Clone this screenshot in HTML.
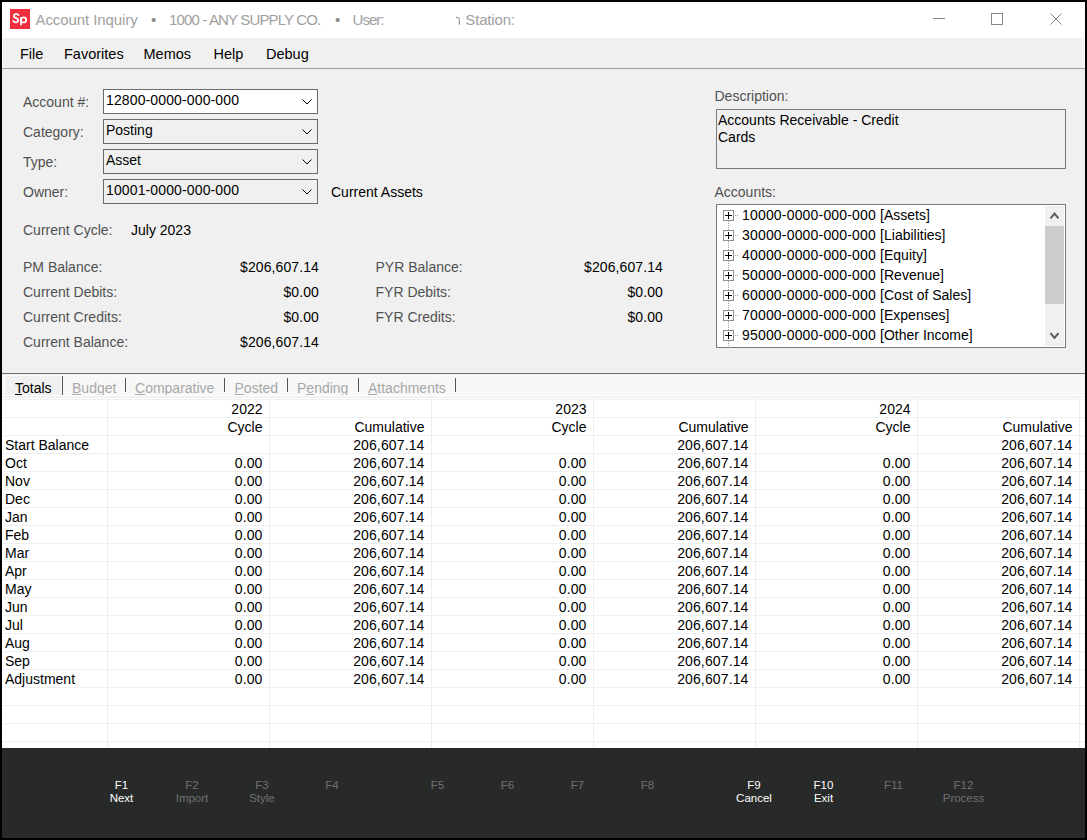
<!DOCTYPE html>
<html><head><meta charset="utf-8">
<style>
*{margin:0;padding:0;box-sizing:border-box}
html,body{width:1087px;height:840px;overflow:hidden;background:#000}
body{position:relative;font-family:"Liberation Sans",sans-serif;font-size:14px;color:#000}
.a{position:absolute;white-space:nowrap}
u{text-decoration:underline;text-underline-offset:1px}
</style></head><body>
<div class="a" style="left:2px;top:2px;width:1083px;height:836px;background:#fff"></div>
<svg class="a" style="left:10px;top:9px" width="20" height="20" viewBox="0 0 20 20"><rect width="20" height="20" fill="#ef2f3e"/><path d="M8.5 6.1C7.7 5.0 6.0 4.8 4.9 5.3C3.5 5.9 3.6 7.9 5.0 8.6L6.8 9.4C8.6 10.2 8.6 12.5 6.9 13.1C5.6 13.5 4.0 13.1 3.3 12.0" fill="none" stroke="#fff" stroke-width="1.8" stroke-linecap="round"/><circle cx="13.6" cy="10.9" r="2.6" fill="none" stroke="#fff" stroke-width="1.7"/><path d="M11.0 8.3V16.3" stroke="#fff" stroke-width="1.8"/></svg>
<div class="a" style="left:35.5px;top:11px;font-size:15px;line-height:17px;color:#a0a0a0;letter-spacing:-0.08px">Account Inquiry</div>
<div class="a" style="left:151px;top:11px;font-size:15px;line-height:17px;color:#8a8a8a;">•</div>
<div class="a" style="left:169px;top:11px;font-size:15px;line-height:17px;color:#a0a0a0;letter-spacing:-0.85px">1000 - ANY SUPPLY CO.</div>
<div class="a" style="left:335px;top:11px;font-size:15px;line-height:17px;color:#8a8a8a;">•</div>
<div class="a" style="left:352.5px;top:11px;font-size:15px;line-height:17px;color:#a0a0a0;letter-spacing:-0.95px">User:</div>
<svg class="a" style="left:450px;top:10px" width="15" height="20" viewBox="450 10 15 20"><path d="M456 17.6C457.8 17.2 459.4 17.6 459.4 19.8V24.8" fill="none" stroke="#9a9a9a" stroke-width="1.2"/></svg>
<div class="a" style="left:465.3px;top:11px;font-size:15px;line-height:17px;color:#a0a0a0;letter-spacing:-0.17px">Station:</div>
<div class="a" style="left:933px;top:18px;width:12px;height:1px;background:#858585"></div>
<div class="a" style="left:991px;top:13px;width:12px;height:12px;border:1px solid #858585"></div>
<svg class="a" style="left:1050px;top:13px" width="12" height="12" viewBox="0 0 12 12"><path d="M0.5 0.5L11.5 11.5M11.5 0.5L0.5 11.5" stroke="#858585" stroke-width="1"/></svg>
<div class="a" style="left:3px;top:38px;width:1081px;height:30px;background:#f0f0f0"></div>
<div class="a" style="left:2px;top:68px;width:1083px;height:1px;background:#a0a0a0"></div>
<div class="a" style="left:20px;top:45.5px;font-size:14.5px;line-height:17px;color:#000;">File</div>
<div class="a" style="left:64px;top:45.5px;font-size:14.5px;line-height:17px;color:#000;">Favorites</div>
<div class="a" style="left:143.5px;top:45.5px;font-size:14.5px;line-height:17px;color:#000;">Memos</div>
<div class="a" style="left:213.5px;top:45.5px;font-size:14.5px;line-height:17px;color:#000;">Help</div>
<div class="a" style="left:266px;top:45.5px;font-size:14.5px;line-height:17px;color:#000;">Debug</div>
<div class="a" style="left:2px;top:69px;width:1083px;height:304px;background:#f0f0f0"></div>
<div class="a" style="left:23px;top:94px;font-size:14px;line-height:16px;color:#505050;">Account #:</div>
<div class="a" style="left:23px;top:124px;font-size:14px;line-height:16px;color:#505050;">Category:</div>
<div class="a" style="left:23px;top:154px;font-size:14px;line-height:16px;color:#505050;">Type:</div>
<div class="a" style="left:23px;top:184px;font-size:14px;line-height:16px;color:#505050;">Owner:</div>
<div class="a" style="left:103px;top:89px;width:215px;height:25px;border:1px solid #6a6a6a;background:#fff"></div>
<div class="a" style="left:106px;top:91.6px;font-size:14px;line-height:16px;color:#000;letter-spacing:0.13px">12800-0000-000-000</div>
<svg class="a" style="left:302px;top:99px" width="10" height="6" viewBox="0 0 10 6"><path d="M0.5 0.5L5 5L9.5 0.5" fill="none" stroke="#000" stroke-width="1"/></svg>
<div class="a" style="left:103px;top:119px;width:215px;height:25px;border:1px solid #6a6a6a;background:#f0f0f0"></div>
<div class="a" style="left:106px;top:121.6px;font-size:14px;line-height:16px;color:#000;">Posting</div>
<svg class="a" style="left:302px;top:129px" width="10" height="6" viewBox="0 0 10 6"><path d="M0.5 0.5L5 5L9.5 0.5" fill="none" stroke="#000" stroke-width="1"/></svg>
<div class="a" style="left:103px;top:149px;width:215px;height:25px;border:1px solid #6a6a6a;background:#f0f0f0"></div>
<div class="a" style="left:106px;top:151.6px;font-size:14px;line-height:16px;color:#000;">Asset</div>
<svg class="a" style="left:302px;top:159px" width="10" height="6" viewBox="0 0 10 6"><path d="M0.5 0.5L5 5L9.5 0.5" fill="none" stroke="#000" stroke-width="1"/></svg>
<div class="a" style="left:103px;top:179px;width:215px;height:25px;border:1px solid #6a6a6a;background:#f0f0f0"></div>
<div class="a" style="left:106px;top:181.6px;font-size:14px;line-height:16px;color:#000;letter-spacing:0.13px">10001-0000-000-000</div>
<svg class="a" style="left:302px;top:189px" width="10" height="6" viewBox="0 0 10 6"><path d="M0.5 0.5L5 5L9.5 0.5" fill="none" stroke="#000" stroke-width="1"/></svg>
<div class="a" style="left:331px;top:184px;font-size:14px;line-height:16px;color:#000;">Current Assets</div>
<div class="a" style="left:23px;top:222px;font-size:14px;line-height:16px;color:#505050;">Current Cycle:</div>
<div class="a" style="left:131px;top:222px;font-size:14px;line-height:16px;color:#000;">July 2023</div>
<div class="a" style="left:23px;top:259px;font-size:14px;line-height:16px;color:#505050;">PM Balance:</div>
<div class="a" style="right:768px;top:259px;font-size:14px;line-height:16px;color:#000;text-align:right;letter-spacing:0.1px">$206,607.14</div>
<div class="a" style="left:375.5px;top:259px;font-size:14px;line-height:16px;color:#505050;">PYR Balance:</div>
<div class="a" style="right:424px;top:259px;font-size:14px;line-height:16px;color:#000;text-align:right;letter-spacing:0.1px">$206,607.14</div>
<div class="a" style="left:23px;top:284px;font-size:14px;line-height:16px;color:#505050;">Current Debits:</div>
<div class="a" style="right:768px;top:284px;font-size:14px;line-height:16px;color:#000;text-align:right;letter-spacing:0.1px">$0.00</div>
<div class="a" style="left:375.5px;top:284px;font-size:14px;line-height:16px;color:#505050;">FYR Debits:</div>
<div class="a" style="right:424px;top:284px;font-size:14px;line-height:16px;color:#000;text-align:right;letter-spacing:0.1px">$0.00</div>
<div class="a" style="left:23px;top:309px;font-size:14px;line-height:16px;color:#505050;">Current Credits:</div>
<div class="a" style="right:768px;top:309px;font-size:14px;line-height:16px;color:#000;text-align:right;letter-spacing:0.1px">$0.00</div>
<div class="a" style="left:375.5px;top:309px;font-size:14px;line-height:16px;color:#505050;">FYR Credits:</div>
<div class="a" style="right:424px;top:309px;font-size:14px;line-height:16px;color:#000;text-align:right;letter-spacing:0.1px">$0.00</div>
<div class="a" style="left:23px;top:334px;font-size:14px;line-height:16px;color:#505050;">Current Balance:</div>
<div class="a" style="right:768px;top:334px;font-size:14px;line-height:16px;color:#000;text-align:right;letter-spacing:0.1px">$206,607.14</div>
<div class="a" style="left:714.5px;top:88px;font-size:14px;line-height:16px;color:#505050;">Description:</div>
<div class="a" style="left:716px;top:109px;width:350px;height:60px;border:1px solid #7a7a7a;background:#f0f0f0"></div>
<div class="a" style="left:718px;top:111.6px;font-size:14px;line-height:16px;color:#000;">Accounts Receivable - Credit</div>
<div class="a" style="left:718px;top:128.6px;font-size:14px;line-height:16px;color:#000;">Cards</div>
<div class="a" style="left:714.5px;top:184px;font-size:14px;line-height:16px;color:#505050;">Accounts:</div>
<div class="a" style="left:716px;top:204px;width:350px;height:144px;border:1px solid #7a7a7a;background:#fff"></div>
<div class="a" style="left:1045px;top:206px;width:19px;height:140px;background:#f0f0f0"></div>
<div class="a" style="left:1045px;top:226px;width:19px;height:78px;background:#cdcdcd"></div>
<svg class="a" style="left:1045px;top:206px" width="19" height="140" viewBox="1045 206 19 140"><path d="M1050.5 218.3L1054.5 213.6L1058.5 218.3" fill="none" stroke="#5c5c5c" stroke-width="2"/><path d="M1050.5 333.1L1054.5 337.9L1058.5 333.1" fill="none" stroke="#5c5c5c" stroke-width="2"/></svg>
<svg class="a" style="left:717px;top:205px" width="328" height="142" viewBox="717 205 328 142">
<rect x="723.5" y="210.5" width="10" height="10" fill="#fff" stroke="#919191"/>
<path d="M725 215.5H732M728.5 212V219" stroke="#000" stroke-width="1"/>
<path d="M735 215.5H739" stroke="#a0a0a0" stroke-dasharray="1 1"/>
<path d="M728.5 221V230" stroke="#a0a0a0" stroke-dasharray="1 1"/>
<rect x="723.5" y="230.5" width="10" height="10" fill="#fff" stroke="#919191"/>
<path d="M725 235.5H732M728.5 232V239" stroke="#000" stroke-width="1"/>
<path d="M735 235.5H739" stroke="#a0a0a0" stroke-dasharray="1 1"/>
<path d="M728.5 241V250" stroke="#a0a0a0" stroke-dasharray="1 1"/>
<rect x="723.5" y="250.5" width="10" height="10" fill="#fff" stroke="#919191"/>
<path d="M725 255.5H732M728.5 252V259" stroke="#000" stroke-width="1"/>
<path d="M735 255.5H739" stroke="#a0a0a0" stroke-dasharray="1 1"/>
<path d="M728.5 261V270" stroke="#a0a0a0" stroke-dasharray="1 1"/>
<rect x="723.5" y="270.5" width="10" height="10" fill="#fff" stroke="#919191"/>
<path d="M725 275.5H732M728.5 272V279" stroke="#000" stroke-width="1"/>
<path d="M735 275.5H739" stroke="#a0a0a0" stroke-dasharray="1 1"/>
<path d="M728.5 281V290" stroke="#a0a0a0" stroke-dasharray="1 1"/>
<rect x="723.5" y="290.5" width="10" height="10" fill="#fff" stroke="#919191"/>
<path d="M725 295.5H732M728.5 292V299" stroke="#000" stroke-width="1"/>
<path d="M735 295.5H739" stroke="#a0a0a0" stroke-dasharray="1 1"/>
<path d="M728.5 301V310" stroke="#a0a0a0" stroke-dasharray="1 1"/>
<rect x="723.5" y="310.5" width="10" height="10" fill="#fff" stroke="#919191"/>
<path d="M725 315.5H732M728.5 312V319" stroke="#000" stroke-width="1"/>
<path d="M735 315.5H739" stroke="#a0a0a0" stroke-dasharray="1 1"/>
<path d="M728.5 321V330" stroke="#a0a0a0" stroke-dasharray="1 1"/>
<rect x="723.5" y="330.5" width="10" height="10" fill="#fff" stroke="#919191"/>
<path d="M725 335.5H732M728.5 332V339" stroke="#000" stroke-width="1"/>
<path d="M735 335.5H739" stroke="#a0a0a0" stroke-dasharray="1 1"/>
<path d="M728.5 341V350" stroke="#a0a0a0" stroke-dasharray="1 1"/>
</svg>
<div class="a" style="left:742px;top:207px;font-size:14px;line-height:16px;color:#000;"><span style="letter-spacing:0.18px">10000-0000-000-000 </span>[Assets]</div>
<div class="a" style="left:742px;top:227px;font-size:14px;line-height:16px;color:#000;"><span style="letter-spacing:0.18px">30000-0000-000-000 </span>[Liabilities]</div>
<div class="a" style="left:742px;top:247px;font-size:14px;line-height:16px;color:#000;"><span style="letter-spacing:0.18px">40000-0000-000-000 </span>[Equity]</div>
<div class="a" style="left:742px;top:267px;font-size:14px;line-height:16px;color:#000;"><span style="letter-spacing:0.18px">50000-0000-000-000 </span>[Revenue]</div>
<div class="a" style="left:742px;top:287px;font-size:14px;line-height:16px;color:#000;"><span style="letter-spacing:0.18px">60000-0000-000-000 </span>[Cost of Sales]</div>
<div class="a" style="left:742px;top:307px;font-size:14px;line-height:16px;color:#000;"><span style="letter-spacing:0.18px">70000-0000-000-000 </span>[Expenses]</div>
<div class="a" style="left:742px;top:327px;font-size:14px;line-height:16px;color:#000;"><span style="letter-spacing:0.18px">95000-0000-000-000 </span>[Other Income]</div>
<div class="a" style="left:2px;top:373px;width:1083px;height:1px;background:#6e6e6e"></div>
<div class="a" style="left:2px;top:374px;width:1083px;height:21px;background:#f7f7f7"></div>
<div class="a" style="left:6px;top:376px;width:55px;height:20px;background:#f0f0f0"></div>
<div class="a" style="left:62px;top:376px;width:1px;height:20px;background:#555"></div>
<div class="a" style="left:15px;top:379.8px;font-size:14px;line-height:16px;color:#000;"><u>T</u>otals</div>
<div class="a" style="left:72px;top:379.8px;font-size:14px;line-height:16px;color:#a8a8a8;"><u>B</u>udget</div>
<div class="a" style="left:125px;top:378px;width:1px;height:14px;background:#555"></div>
<div class="a" style="left:135px;top:379.8px;font-size:14px;line-height:16px;color:#a8a8a8;"><u>C</u>omparative</div>
<div class="a" style="left:224px;top:378px;width:1px;height:14px;background:#555"></div>
<div class="a" style="left:234.5px;top:379.8px;font-size:14px;line-height:16px;color:#a8a8a8;"><u>P</u>osted</div>
<div class="a" style="left:287px;top:378px;width:1px;height:14px;background:#555"></div>
<div class="a" style="left:297px;top:379.8px;font-size:14px;line-height:16px;color:#a8a8a8;">P<u>e</u>nding</div>
<div class="a" style="left:358px;top:378px;width:1px;height:14px;background:#555"></div>
<div class="a" style="left:368px;top:379.8px;font-size:14px;line-height:16px;color:#a8a8a8;"><u>A</u>ttachments</div>
<div class="a" style="left:455px;top:378px;width:1px;height:14px;background:#555"></div>
<div class="a" style="left:2px;top:395px;width:1083px;height:353px;background:#fff"></div>
<div class="a" style="left:3px;top:396px;width:1082px;height:2px;background:#f1f1f1"></div>
<div class="a" style="left:3px;top:399px;width:1082px;height:1px;background:#efefef"></div>
<div class="a" style="left:3px;top:417px;width:1082px;height:1px;background:#efefef"></div>
<div class="a" style="left:3px;top:435px;width:1082px;height:1px;background:#efefef"></div>
<div class="a" style="left:3px;top:453px;width:1082px;height:1px;background:#efefef"></div>
<div class="a" style="left:3px;top:471px;width:1082px;height:1px;background:#efefef"></div>
<div class="a" style="left:3px;top:489px;width:1082px;height:1px;background:#efefef"></div>
<div class="a" style="left:3px;top:507px;width:1082px;height:1px;background:#efefef"></div>
<div class="a" style="left:3px;top:525px;width:1082px;height:1px;background:#efefef"></div>
<div class="a" style="left:3px;top:543px;width:1082px;height:1px;background:#efefef"></div>
<div class="a" style="left:3px;top:561px;width:1082px;height:1px;background:#efefef"></div>
<div class="a" style="left:3px;top:579px;width:1082px;height:1px;background:#efefef"></div>
<div class="a" style="left:3px;top:597px;width:1082px;height:1px;background:#efefef"></div>
<div class="a" style="left:3px;top:615px;width:1082px;height:1px;background:#efefef"></div>
<div class="a" style="left:3px;top:633px;width:1082px;height:1px;background:#efefef"></div>
<div class="a" style="left:3px;top:651px;width:1082px;height:1px;background:#efefef"></div>
<div class="a" style="left:3px;top:669px;width:1082px;height:1px;background:#efefef"></div>
<div class="a" style="left:3px;top:687px;width:1082px;height:1px;background:#efefef"></div>
<div class="a" style="left:3px;top:705px;width:1082px;height:1px;background:#efefef"></div>
<div class="a" style="left:3px;top:723px;width:1082px;height:1px;background:#efefef"></div>
<div class="a" style="left:3px;top:741px;width:1082px;height:1px;background:#efefef"></div>
<div class="a" style="left:107px;top:397px;width:1px;height:351px;background:#efefef"></div>
<div class="a" style="left:269px;top:397px;width:1px;height:351px;background:#efefef"></div>
<div class="a" style="left:431px;top:397px;width:1px;height:351px;background:#efefef"></div>
<div class="a" style="left:593px;top:397px;width:1px;height:351px;background:#efefef"></div>
<div class="a" style="left:755px;top:397px;width:1px;height:351px;background:#efefef"></div>
<div class="a" style="left:917px;top:397px;width:1px;height:351px;background:#efefef"></div>
<div class="a" style="left:1079px;top:397px;width:1px;height:351px;background:#efefef"></div>
<div class="a" style="right:824.5px;top:401px;font-size:14px;line-height:16px;color:#000;text-align:right;">2022</div>
<div class="a" style="right:500.5px;top:401px;font-size:14px;line-height:16px;color:#000;text-align:right;">2023</div>
<div class="a" style="right:176.5px;top:401px;font-size:14px;line-height:16px;color:#000;text-align:right;">2024</div>
<div class="a" style="right:824.5px;top:419px;font-size:14px;line-height:16px;color:#000;text-align:right;">Cycle</div>
<div class="a" style="right:662.5px;top:419px;font-size:14px;line-height:16px;color:#000;text-align:right;">Cumulative</div>
<div class="a" style="right:500.5px;top:419px;font-size:14px;line-height:16px;color:#000;text-align:right;">Cycle</div>
<div class="a" style="right:338.5px;top:419px;font-size:14px;line-height:16px;color:#000;text-align:right;">Cumulative</div>
<div class="a" style="right:176.5px;top:419px;font-size:14px;line-height:16px;color:#000;text-align:right;">Cycle</div>
<div class="a" style="right:14.5px;top:419px;font-size:14px;line-height:16px;color:#000;text-align:right;">Cumulative</div>
<div class="a" style="left:5px;top:437px;font-size:14px;line-height:16px;color:#000;">Start Balance</div>
<div class="a" style="right:662.5px;top:437px;font-size:14px;line-height:16px;color:#000;text-align:right;letter-spacing:0.13px">206,607.14</div>
<div class="a" style="right:338.5px;top:437px;font-size:14px;line-height:16px;color:#000;text-align:right;letter-spacing:0.13px">206,607.14</div>
<div class="a" style="right:14.5px;top:437px;font-size:14px;line-height:16px;color:#000;text-align:right;letter-spacing:0.13px">206,607.14</div>
<div class="a" style="left:5px;top:455px;font-size:14px;line-height:16px;color:#000;">Oct</div>
<div class="a" style="right:824.5px;top:455px;font-size:14px;line-height:16px;color:#000;text-align:right;letter-spacing:0.13px">0.00</div>
<div class="a" style="right:662.5px;top:455px;font-size:14px;line-height:16px;color:#000;text-align:right;letter-spacing:0.13px">206,607.14</div>
<div class="a" style="right:500.5px;top:455px;font-size:14px;line-height:16px;color:#000;text-align:right;letter-spacing:0.13px">0.00</div>
<div class="a" style="right:338.5px;top:455px;font-size:14px;line-height:16px;color:#000;text-align:right;letter-spacing:0.13px">206,607.14</div>
<div class="a" style="right:176.5px;top:455px;font-size:14px;line-height:16px;color:#000;text-align:right;letter-spacing:0.13px">0.00</div>
<div class="a" style="right:14.5px;top:455px;font-size:14px;line-height:16px;color:#000;text-align:right;letter-spacing:0.13px">206,607.14</div>
<div class="a" style="left:5px;top:473px;font-size:14px;line-height:16px;color:#000;">Nov</div>
<div class="a" style="right:824.5px;top:473px;font-size:14px;line-height:16px;color:#000;text-align:right;letter-spacing:0.13px">0.00</div>
<div class="a" style="right:662.5px;top:473px;font-size:14px;line-height:16px;color:#000;text-align:right;letter-spacing:0.13px">206,607.14</div>
<div class="a" style="right:500.5px;top:473px;font-size:14px;line-height:16px;color:#000;text-align:right;letter-spacing:0.13px">0.00</div>
<div class="a" style="right:338.5px;top:473px;font-size:14px;line-height:16px;color:#000;text-align:right;letter-spacing:0.13px">206,607.14</div>
<div class="a" style="right:176.5px;top:473px;font-size:14px;line-height:16px;color:#000;text-align:right;letter-spacing:0.13px">0.00</div>
<div class="a" style="right:14.5px;top:473px;font-size:14px;line-height:16px;color:#000;text-align:right;letter-spacing:0.13px">206,607.14</div>
<div class="a" style="left:5px;top:491px;font-size:14px;line-height:16px;color:#000;">Dec</div>
<div class="a" style="right:824.5px;top:491px;font-size:14px;line-height:16px;color:#000;text-align:right;letter-spacing:0.13px">0.00</div>
<div class="a" style="right:662.5px;top:491px;font-size:14px;line-height:16px;color:#000;text-align:right;letter-spacing:0.13px">206,607.14</div>
<div class="a" style="right:500.5px;top:491px;font-size:14px;line-height:16px;color:#000;text-align:right;letter-spacing:0.13px">0.00</div>
<div class="a" style="right:338.5px;top:491px;font-size:14px;line-height:16px;color:#000;text-align:right;letter-spacing:0.13px">206,607.14</div>
<div class="a" style="right:176.5px;top:491px;font-size:14px;line-height:16px;color:#000;text-align:right;letter-spacing:0.13px">0.00</div>
<div class="a" style="right:14.5px;top:491px;font-size:14px;line-height:16px;color:#000;text-align:right;letter-spacing:0.13px">206,607.14</div>
<div class="a" style="left:5px;top:509px;font-size:14px;line-height:16px;color:#000;">Jan</div>
<div class="a" style="right:824.5px;top:509px;font-size:14px;line-height:16px;color:#000;text-align:right;letter-spacing:0.13px">0.00</div>
<div class="a" style="right:662.5px;top:509px;font-size:14px;line-height:16px;color:#000;text-align:right;letter-spacing:0.13px">206,607.14</div>
<div class="a" style="right:500.5px;top:509px;font-size:14px;line-height:16px;color:#000;text-align:right;letter-spacing:0.13px">0.00</div>
<div class="a" style="right:338.5px;top:509px;font-size:14px;line-height:16px;color:#000;text-align:right;letter-spacing:0.13px">206,607.14</div>
<div class="a" style="right:176.5px;top:509px;font-size:14px;line-height:16px;color:#000;text-align:right;letter-spacing:0.13px">0.00</div>
<div class="a" style="right:14.5px;top:509px;font-size:14px;line-height:16px;color:#000;text-align:right;letter-spacing:0.13px">206,607.14</div>
<div class="a" style="left:5px;top:527px;font-size:14px;line-height:16px;color:#000;">Feb</div>
<div class="a" style="right:824.5px;top:527px;font-size:14px;line-height:16px;color:#000;text-align:right;letter-spacing:0.13px">0.00</div>
<div class="a" style="right:662.5px;top:527px;font-size:14px;line-height:16px;color:#000;text-align:right;letter-spacing:0.13px">206,607.14</div>
<div class="a" style="right:500.5px;top:527px;font-size:14px;line-height:16px;color:#000;text-align:right;letter-spacing:0.13px">0.00</div>
<div class="a" style="right:338.5px;top:527px;font-size:14px;line-height:16px;color:#000;text-align:right;letter-spacing:0.13px">206,607.14</div>
<div class="a" style="right:176.5px;top:527px;font-size:14px;line-height:16px;color:#000;text-align:right;letter-spacing:0.13px">0.00</div>
<div class="a" style="right:14.5px;top:527px;font-size:14px;line-height:16px;color:#000;text-align:right;letter-spacing:0.13px">206,607.14</div>
<div class="a" style="left:5px;top:545px;font-size:14px;line-height:16px;color:#000;">Mar</div>
<div class="a" style="right:824.5px;top:545px;font-size:14px;line-height:16px;color:#000;text-align:right;letter-spacing:0.13px">0.00</div>
<div class="a" style="right:662.5px;top:545px;font-size:14px;line-height:16px;color:#000;text-align:right;letter-spacing:0.13px">206,607.14</div>
<div class="a" style="right:500.5px;top:545px;font-size:14px;line-height:16px;color:#000;text-align:right;letter-spacing:0.13px">0.00</div>
<div class="a" style="right:338.5px;top:545px;font-size:14px;line-height:16px;color:#000;text-align:right;letter-spacing:0.13px">206,607.14</div>
<div class="a" style="right:176.5px;top:545px;font-size:14px;line-height:16px;color:#000;text-align:right;letter-spacing:0.13px">0.00</div>
<div class="a" style="right:14.5px;top:545px;font-size:14px;line-height:16px;color:#000;text-align:right;letter-spacing:0.13px">206,607.14</div>
<div class="a" style="left:5px;top:563px;font-size:14px;line-height:16px;color:#000;">Apr</div>
<div class="a" style="right:824.5px;top:563px;font-size:14px;line-height:16px;color:#000;text-align:right;letter-spacing:0.13px">0.00</div>
<div class="a" style="right:662.5px;top:563px;font-size:14px;line-height:16px;color:#000;text-align:right;letter-spacing:0.13px">206,607.14</div>
<div class="a" style="right:500.5px;top:563px;font-size:14px;line-height:16px;color:#000;text-align:right;letter-spacing:0.13px">0.00</div>
<div class="a" style="right:338.5px;top:563px;font-size:14px;line-height:16px;color:#000;text-align:right;letter-spacing:0.13px">206,607.14</div>
<div class="a" style="right:176.5px;top:563px;font-size:14px;line-height:16px;color:#000;text-align:right;letter-spacing:0.13px">0.00</div>
<div class="a" style="right:14.5px;top:563px;font-size:14px;line-height:16px;color:#000;text-align:right;letter-spacing:0.13px">206,607.14</div>
<div class="a" style="left:5px;top:581px;font-size:14px;line-height:16px;color:#000;">May</div>
<div class="a" style="right:824.5px;top:581px;font-size:14px;line-height:16px;color:#000;text-align:right;letter-spacing:0.13px">0.00</div>
<div class="a" style="right:662.5px;top:581px;font-size:14px;line-height:16px;color:#000;text-align:right;letter-spacing:0.13px">206,607.14</div>
<div class="a" style="right:500.5px;top:581px;font-size:14px;line-height:16px;color:#000;text-align:right;letter-spacing:0.13px">0.00</div>
<div class="a" style="right:338.5px;top:581px;font-size:14px;line-height:16px;color:#000;text-align:right;letter-spacing:0.13px">206,607.14</div>
<div class="a" style="right:176.5px;top:581px;font-size:14px;line-height:16px;color:#000;text-align:right;letter-spacing:0.13px">0.00</div>
<div class="a" style="right:14.5px;top:581px;font-size:14px;line-height:16px;color:#000;text-align:right;letter-spacing:0.13px">206,607.14</div>
<div class="a" style="left:5px;top:599px;font-size:14px;line-height:16px;color:#000;">Jun</div>
<div class="a" style="right:824.5px;top:599px;font-size:14px;line-height:16px;color:#000;text-align:right;letter-spacing:0.13px">0.00</div>
<div class="a" style="right:662.5px;top:599px;font-size:14px;line-height:16px;color:#000;text-align:right;letter-spacing:0.13px">206,607.14</div>
<div class="a" style="right:500.5px;top:599px;font-size:14px;line-height:16px;color:#000;text-align:right;letter-spacing:0.13px">0.00</div>
<div class="a" style="right:338.5px;top:599px;font-size:14px;line-height:16px;color:#000;text-align:right;letter-spacing:0.13px">206,607.14</div>
<div class="a" style="right:176.5px;top:599px;font-size:14px;line-height:16px;color:#000;text-align:right;letter-spacing:0.13px">0.00</div>
<div class="a" style="right:14.5px;top:599px;font-size:14px;line-height:16px;color:#000;text-align:right;letter-spacing:0.13px">206,607.14</div>
<div class="a" style="left:5px;top:617px;font-size:14px;line-height:16px;color:#000;">Jul</div>
<div class="a" style="right:824.5px;top:617px;font-size:14px;line-height:16px;color:#000;text-align:right;letter-spacing:0.13px">0.00</div>
<div class="a" style="right:662.5px;top:617px;font-size:14px;line-height:16px;color:#000;text-align:right;letter-spacing:0.13px">206,607.14</div>
<div class="a" style="right:500.5px;top:617px;font-size:14px;line-height:16px;color:#000;text-align:right;letter-spacing:0.13px">0.00</div>
<div class="a" style="right:338.5px;top:617px;font-size:14px;line-height:16px;color:#000;text-align:right;letter-spacing:0.13px">206,607.14</div>
<div class="a" style="right:176.5px;top:617px;font-size:14px;line-height:16px;color:#000;text-align:right;letter-spacing:0.13px">0.00</div>
<div class="a" style="right:14.5px;top:617px;font-size:14px;line-height:16px;color:#000;text-align:right;letter-spacing:0.13px">206,607.14</div>
<div class="a" style="left:5px;top:635px;font-size:14px;line-height:16px;color:#000;">Aug</div>
<div class="a" style="right:824.5px;top:635px;font-size:14px;line-height:16px;color:#000;text-align:right;letter-spacing:0.13px">0.00</div>
<div class="a" style="right:662.5px;top:635px;font-size:14px;line-height:16px;color:#000;text-align:right;letter-spacing:0.13px">206,607.14</div>
<div class="a" style="right:500.5px;top:635px;font-size:14px;line-height:16px;color:#000;text-align:right;letter-spacing:0.13px">0.00</div>
<div class="a" style="right:338.5px;top:635px;font-size:14px;line-height:16px;color:#000;text-align:right;letter-spacing:0.13px">206,607.14</div>
<div class="a" style="right:176.5px;top:635px;font-size:14px;line-height:16px;color:#000;text-align:right;letter-spacing:0.13px">0.00</div>
<div class="a" style="right:14.5px;top:635px;font-size:14px;line-height:16px;color:#000;text-align:right;letter-spacing:0.13px">206,607.14</div>
<div class="a" style="left:5px;top:653px;font-size:14px;line-height:16px;color:#000;">Sep</div>
<div class="a" style="right:824.5px;top:653px;font-size:14px;line-height:16px;color:#000;text-align:right;letter-spacing:0.13px">0.00</div>
<div class="a" style="right:662.5px;top:653px;font-size:14px;line-height:16px;color:#000;text-align:right;letter-spacing:0.13px">206,607.14</div>
<div class="a" style="right:500.5px;top:653px;font-size:14px;line-height:16px;color:#000;text-align:right;letter-spacing:0.13px">0.00</div>
<div class="a" style="right:338.5px;top:653px;font-size:14px;line-height:16px;color:#000;text-align:right;letter-spacing:0.13px">206,607.14</div>
<div class="a" style="right:176.5px;top:653px;font-size:14px;line-height:16px;color:#000;text-align:right;letter-spacing:0.13px">0.00</div>
<div class="a" style="right:14.5px;top:653px;font-size:14px;line-height:16px;color:#000;text-align:right;letter-spacing:0.13px">206,607.14</div>
<div class="a" style="left:5px;top:671px;font-size:14px;line-height:16px;color:#000;">Adjustment</div>
<div class="a" style="right:824.5px;top:671px;font-size:14px;line-height:16px;color:#000;text-align:right;letter-spacing:0.13px">0.00</div>
<div class="a" style="right:662.5px;top:671px;font-size:14px;line-height:16px;color:#000;text-align:right;letter-spacing:0.13px">206,607.14</div>
<div class="a" style="right:500.5px;top:671px;font-size:14px;line-height:16px;color:#000;text-align:right;letter-spacing:0.13px">0.00</div>
<div class="a" style="right:338.5px;top:671px;font-size:14px;line-height:16px;color:#000;text-align:right;letter-spacing:0.13px">206,607.14</div>
<div class="a" style="right:176.5px;top:671px;font-size:14px;line-height:16px;color:#000;text-align:right;letter-spacing:0.13px">0.00</div>
<div class="a" style="right:14.5px;top:671px;font-size:14px;line-height:16px;color:#000;text-align:right;letter-spacing:0.13px">206,607.14</div>
<div class="a" style="left:2px;top:748px;width:1083px;height:90px;background:#282a29"></div>
<div class="a" style="left:61.5px;width:120px;top:778px;font-size:11.5px;line-height:14px;color:#ffffff;text-align:center;">F1</div>
<div class="a" style="left:61.5px;width:120px;top:791px;font-size:11.5px;line-height:14px;color:#ffffff;text-align:center;">Next</div>
<div class="a" style="left:132.0px;width:120px;top:778px;font-size:11.5px;line-height:14px;color:#707070;text-align:center;">F2</div>
<div class="a" style="left:132.0px;width:120px;top:791px;font-size:11.5px;line-height:14px;color:#707070;text-align:center;">Import</div>
<div class="a" style="left:202.0px;width:120px;top:778px;font-size:11.5px;line-height:14px;color:#707070;text-align:center;">F3</div>
<div class="a" style="left:202.0px;width:120px;top:791px;font-size:11.5px;line-height:14px;color:#707070;text-align:center;">Style</div>
<div class="a" style="left:272.0px;width:120px;top:778px;font-size:11.5px;line-height:14px;color:#707070;text-align:center;">F4</div>
<div class="a" style="left:377.5px;width:120px;top:778px;font-size:11.5px;line-height:14px;color:#707070;text-align:center;">F5</div>
<div class="a" style="left:447.5px;width:120px;top:778px;font-size:11.5px;line-height:14px;color:#707070;text-align:center;">F6</div>
<div class="a" style="left:517.5px;width:120px;top:778px;font-size:11.5px;line-height:14px;color:#707070;text-align:center;">F7</div>
<div class="a" style="left:587.5px;width:120px;top:778px;font-size:11.5px;line-height:14px;color:#707070;text-align:center;">F8</div>
<div class="a" style="left:694.0px;width:120px;top:778px;font-size:11.5px;line-height:14px;color:#ffffff;text-align:center;">F9</div>
<div class="a" style="left:694.0px;width:120px;top:791px;font-size:11.5px;line-height:14px;color:#ffffff;text-align:center;">Cancel</div>
<div class="a" style="left:763.5px;width:120px;top:778px;font-size:11.5px;line-height:14px;color:#ffffff;text-align:center;">F10</div>
<div class="a" style="left:763.5px;width:120px;top:791px;font-size:11.5px;line-height:14px;color:#ffffff;text-align:center;">Exit</div>
<div class="a" style="left:833.5px;width:120px;top:778px;font-size:11.5px;line-height:14px;color:#707070;text-align:center;">F11</div>
<div class="a" style="left:903.5px;width:120px;top:778px;font-size:11.5px;line-height:14px;color:#707070;text-align:center;">F12</div>
<div class="a" style="left:903.5px;width:120px;top:791px;font-size:11.5px;line-height:14px;color:#707070;text-align:center;">Process</div>
</body></html>
